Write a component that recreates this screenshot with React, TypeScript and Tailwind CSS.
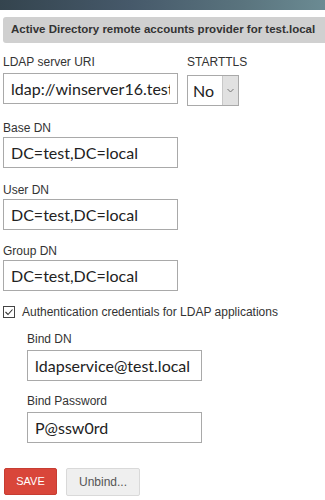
import React from "react";

const label = "block h-[14px] text-[12px] leading-[14px] text-[#333] [font-family:'Liberation_Sans',Arial,sans-serif] whitespace-nowrap";
const input =
  "block h-[31px] border border-[#a9a9a9] bg-white px-[7px] text-[16px] text-[#222] [font-family:Lato,sans-serif] outline-none";

export default function App() {
  return (
    <div className="w-[325px] h-[500px] bg-white overflow-hidden">
      <div className="h-[10px] w-full bg-[#46596a] bg-[linear-gradient(90deg,#34444e_0%,#46596a_40%,#5a747e_75%,#6b8b93_100%)]" />
      <div className="ml-[3px] mt-[7px] h-[26px] rounded-l-[3px] bg-[#d0d0d0] pl-[8px] flex items-center whitespace-nowrap overflow-hidden">
        <span className="text-[11.5px] font-bold text-[#333] [font-family:'Liberation_Sans',Arial,sans-serif]">
          Active Directory remote accounts provider for test.local
        </span>
      </div>
      <div className="pl-[3px] pt-[12px]">
        <div className="flex gap-[9px]">
          <div>
            <span className={label}>LDAP server URI</span>
            <input className={`${input} w-[175px] mt-[4px]`} defaultValue="ldap://winserver16.test.local" />
          </div>
          <div>
            <span className={label}>STARTTLS</span>
            <div className="mt-[6px] flex h-[31px] w-[52px] border border-[#a9a9a9] bg-white">
              <span className="flex-1 pl-[5px] text-[16px] leading-[29px] text-[#222] [font-family:Lato,sans-serif]">No</span>
              <span className="w-[16px] bg-[#e1e1e1] border-l border-[#c8c8c8] flex items-center justify-center">
                <svg width="7" height="5" viewBox="0 0 7 5"><path d="M0.5 1l3 3 3-3" fill="none" stroke="#777" strokeWidth="1" /></svg>
              </span>
            </div>
          </div>
        </div>
        <div className="mt-[15px]">
          <span className={label}>Base DN</span>
          <input className={`${input} w-[175px] mt-[2px]`} defaultValue="DC=test,DC=local" />
        </div>
        <div className="mt-[15px]">
          <span className={label}>User DN</span>
          <input className={`${input} w-[175px] mt-[2px]`} defaultValue="DC=test,DC=local" />
        </div>
        <div className="mt-[14px]">
          <span className={label}>Group DN</span>
          <input className={`${input} w-[175px] mt-[2px]`} defaultValue="DC=test,DC=local" />
        </div>
        <div className="mt-[14px] flex items-center gap-[7px] h-[14px]">
          <span className="w-[12px] h-[12px] border border-[#444] flex items-center justify-center bg-white">
            <svg width="10" height="10" viewBox="0 0 10 10"><path d="M1.5 5l2.5 2.5 4.5-5" fill="none" stroke="#333" strokeWidth="1.1" /></svg>
          </span>
          <span className="text-[12px] text-[#333] [font-family:'Liberation_Sans',Arial,sans-serif] whitespace-nowrap">
            Authentication credentials for LDAP applications
          </span>
        </div>
        <div className="pl-[24px]">
          <div className="mt-[13px]">
            <span className={label}>Bind DN</span>
            <input className={`${input} w-[175px] mt-[4px]`} defaultValue="ldapservice@test.local" />
          </div>
          <div className="mt-[13px]">
            <span className={label}>Bind Password</span>
            <input className={`${input} w-[175px] mt-[4px]`} defaultValue="P@ssw0rd" />
          </div>
        </div>
        <div className="mt-[25px] flex gap-[9px] pl-[1px]">
          <button className="h-[27px] w-[53px] bg-[#d9463a] border border-[#c73d32] text-white text-[11px] [font-family:'Liberation_Sans',Arial,sans-serif] rounded-[2px]">
            SAVE
          </button>
          <button className="h-[28px] w-[74px] bg-[#efefef] border border-[#d9d9d9] text-[#555] text-[12px] [font-family:'Liberation_Sans',Arial,sans-serif] rounded-[2px]">
            Unbind...
          </button>
        </div>
      </div>
    </div>
  );
}
